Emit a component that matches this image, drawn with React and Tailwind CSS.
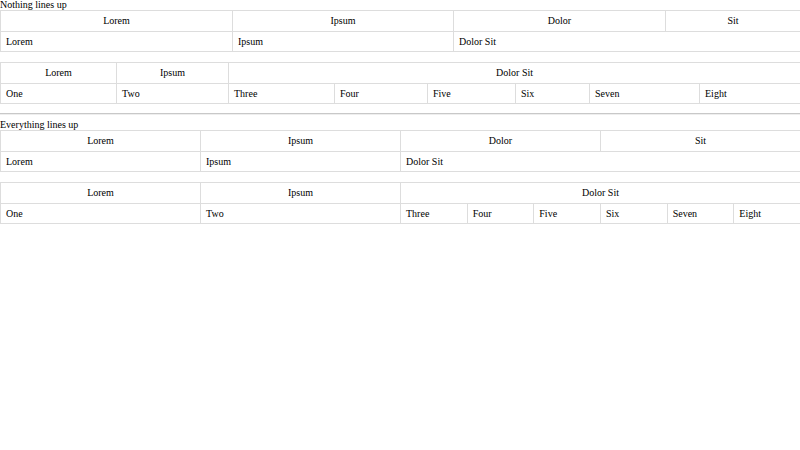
import React from 'react';

const cell = "border border-[#dddddd] px-[5px] py-[4px] leading-[11.5px] font-normal";

function Table({ head, body, widths, gap = 'mb-[10px]' }) {
  return (
    <table className={"w-full table-fixed border-collapse " + gap}>
      <colgroup>
        {widths.map((w, i) => <col key={i} style={{ width: w }} />)}
      </colgroup>
      <thead>
        <tr>
          {head.map(([label, span], i) => (
            <th key={i} colSpan={span} className={cell + " text-center"}>{label}</th>
          ))}
        </tr>
      </thead>
      <tbody>
        <tr>
          {body.map(([label, span], i) => (
            <td key={i} colSpan={span} className={cell + " text-left"}>{label}</td>
          ))}
        </tr>
      </tbody>
    </table>
  );
}

export default function App() {
  return (
    <div className="w-[800px] h-[450px] bg-white text-black text-[10px] font-['Liberation_Serif',serif]">
      <div className="leading-[10px] h-[10px]">Nothing lines up</div>
      <Table
        widths={['232px', '221px', '212px', '135px']}
        head={[['Lorem', 1], ['Ipsum', 1], ['Dolor', 1], ['Sit', 1]]}
        body={[['Lorem', 1], ['Ipsum', 1], ['Dolor Sit', 2]]}
      />
      <Table
        gap="mb-[9px]"
        widths={['116px', '112px', '106px', '93px', '88px', '74px', '110px', '101px']}
        head={[['Lorem', 1], ['Ipsum', 1], ['Dolor Sit', 6]]}
        body={[['One', 1], ['Two', 1], ['Three', 1], ['Four', 1], ['Five', 1], ['Six', 1], ['Seven', 1], ['Eight', 1]]}
      />
      <hr className="border-t border-t-[#c8c8c8] border-b border-b-[#eeeeee] mb-[4px]" />
      <div className="leading-[11px] h-[11px]">Everything lines up</div>
      <Table
        widths={['200px', '200px', '200px', '200px']}
        head={[['Lorem', 1], ['Ipsum', 1], ['Dolor', 1], ['Sit', 1]]}
        body={[['Lorem', 1], ['Ipsum', 1], ['Dolor Sit', 2]]}
      />
      <Table
        widths={['200px', '200px', '66.66px', '66.67px', '66.67px', '66.66px', '66.67px', '66.67px']}
        head={[['Lorem', 1], ['Ipsum', 1], ['Dolor Sit', 6]]}
        body={[['One', 1], ['Two', 1], ['Three', 1], ['Four', 1], ['Five', 1], ['Six', 1], ['Seven', 1], ['Eight', 1]]}
      />
    </div>
  );
}
